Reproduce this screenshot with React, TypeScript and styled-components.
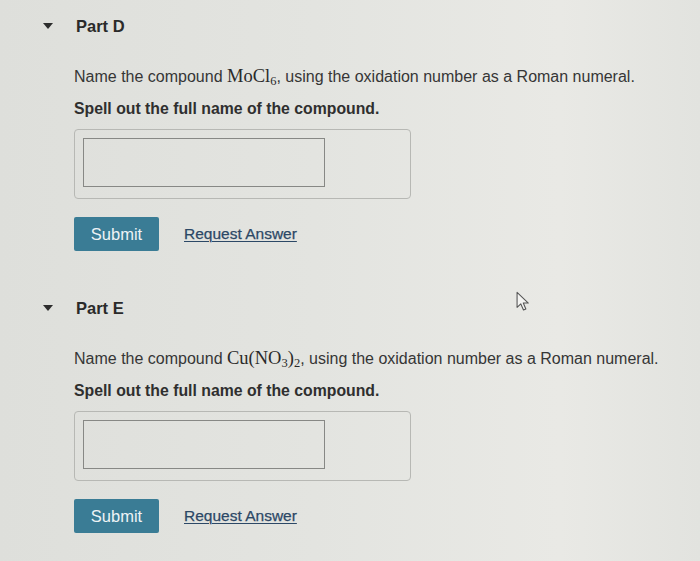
import React from 'react';
import styled, {createGlobalStyle} from 'styled-components';

const GlobalStyle = createGlobalStyle`
  html, body {
    margin: 0;
    padding: 0;
  }

  body {
    width: 700px;
    height: 561px;
    overflow: hidden;
    background: linear-gradient(90deg, #dedfdb 0%, #e3e4e0 45%, #e9e9e5 80%, #e2e3df 100%);
    font-family: 'Liberation Sans', Arial, sans-serif;
    color: #2b2b2b;
  }
`;

const Page = styled.div`
  box-sizing: border-box;
  width: 700px;
  height: 561px;
  padding: 16px 0 0 43px;
  display: flex;
  flex-direction: column;
  gap: 47px;
`;

const PartSection = styled.section`
  display: flex;
  flex-direction: column;
`;

const PartHeader = styled.div`
  display: flex;
  align-items: center;
  height: 20px;
`;

const Caret = styled.span`
  width: 0;
  height: 0;
  border-left: 5.5px solid transparent;
  border-right: 5.5px solid transparent;
  border-top: 6px solid #2d2d2d;
  margin-right: 23px;
`;

const PartTitle = styled.h2`
  margin: 0;
  font-size: 16.5px;
  line-height: 20px;
  font-weight: 700;
  color: #2a2a2a;
`;

const PartBody = styled.div`
  display: flex;
  flex-direction: column;
  padding-left: 31px;
`;

const Prompt = styled.p`
  margin: 30px 0 0;
  font-size: 16px;
  line-height: 20px;
  color: #363636;
`;

const Formula = styled.span`
  font-family: 'Liberation Serif', 'Times New Roman', serif;
  font-size: 18.5px;
  color: #2a2a2a;

  sub {
    font-size: 12.5px;
    vertical-align: -3px;
    line-height: 0;
  }
`;

const Instruction = styled.p`
  margin: 12px 0 0;
  font-size: 15.8px;
  line-height: 20px;
  font-weight: 700;
  color: #2f2f2f;
`;

const AnswerFrame = styled.div`
  box-sizing: border-box;
  margin-top: 10px;
  width: 337px;
  height: 70px;
  padding: 8px 0 0 8px;
  border: 1px solid #b7b8b4;
  border-radius: 4px;
`;

const AnswerInput = styled.input`
  box-sizing: border-box;
  display: block;
  width: 242px;
  height: 49px;
  margin: 0;
  border: 1px solid #878885;
  background: transparent;
  outline: none;
`;

const Actions = styled.div`
  display: flex;
  align-items: center;
  margin-top: 18px;
  gap: 25px;
`;

const SubmitButton = styled.button`
  box-sizing: border-box;
  width: 85px;
  height: 34px;
  border: none;
  border-radius: 2px;
  background: #3a7c95;
  color: #eef3f5;
  font-family: 'Liberation Sans', Arial, sans-serif;
  font-size: 16.5px;
  padding: 0;
`;

const RequestLink = styled.a`
  font-size: 15.5px;
  color: #2c4866;
  text-decoration: underline;
  text-underline-offset: 2px;
  text-decoration-thickness: 1px;
  -webkit-text-stroke: 0.25px #2c4866;
`;

const Pointer = styled.svg`
  position: absolute;
  left: 516px;
  top: 291px;
`;

interface PartProps {
  /** Letter shown after "Part" */
  letter: string;
  /** The formula shown inside the prompt */
  formula: React.ReactNode;
}

const Part = (props: PartProps) => {
  const {letter, formula} = props;

  return (
    <PartSection>
      <PartHeader>
        <Caret />
        <PartTitle>Part {letter}</PartTitle>
      </PartHeader>
      <PartBody>
        <Prompt>
          Name the compound <Formula>{formula}</Formula>, using the oxidation number as a Roman numeral.
        </Prompt>
        <Instruction>Spell out the full name of the compound.</Instruction>
        <AnswerFrame>
          <AnswerInput type="text" />
        </AnswerFrame>
        <Actions>
          <SubmitButton>Submit</SubmitButton>
          <RequestLink href="#">Request Answer</RequestLink>
        </Actions>
      </PartBody>
    </PartSection>
  );
};

const App = () => {
  return (
    <>
      <GlobalStyle />
      <Page>
        <Part
          letter="D"
          formula={
            <>
              MoCl<sub>6</sub>
            </>
          }
        />
        <Part
          letter="E"
          formula={
            <>
              Cu(NO<sub>3</sub>)<sub>2</sub>
            </>
          }
        />
      </Page>
      <Pointer width="15" height="22" viewBox="0 0 14 20">
        <path
          d="M1 1 L1 15 L4.5 11.8 L7 17.5 L9.2 16.5 L6.8 11 L11.5 11 Z"
          fill="#f4f4f2"
          stroke="#555"
          strokeWidth="1"
          strokeLinejoin="round"
        />
      </Pointer>
    </>
  );
};

export default App;
